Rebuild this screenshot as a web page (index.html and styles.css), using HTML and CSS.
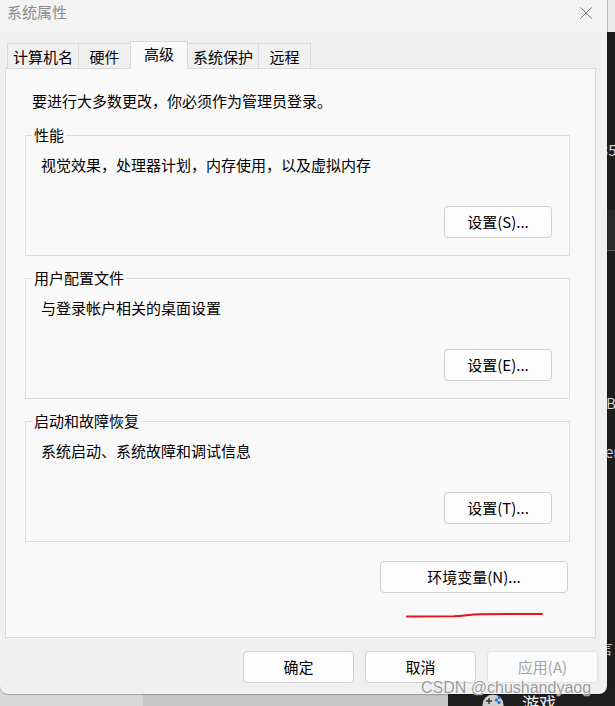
FILE: index.html
```html
<!DOCTYPE html>
<html lang="zh-CN">
<head>
<meta charset="utf-8">
<title>系统属性</title>
<link rel="stylesheet" href="styles.css">
</head>
<body>
<div class="screen">
  <div class="window">
    <div class="titlebar">
      <span class="title">系统属性</span>
      <svg class="close" width="12" height="12" viewBox="0 0 12 12" aria-label="关闭"><path d="M0.5 0.5 L11.5 11.5 M11.5 0.5 L0.5 11.5" stroke="#6f6f6f" stroke-width="1" fill="none"/></svg>
    </div>
    <div class="tabs">
      <div class="tab">计算机名</div>
      <div class="tab">硬件</div>
      <div class="tab active">高级</div>
      <div class="tab">系统保护</div>
      <div class="tab">远程</div>
    </div>
    <div class="panel">
      <p class="intro">要进行大多数更改，你必须作为管理员登录。</p>
      <fieldset class="group">
        <legend>性能</legend>
        <p class="desc">视觉效果，处理器计划，内存使用，以及虚拟内存</p>
        <div class="group-actions"><button class="btn set">设置(S)...</button></div>
      </fieldset>
      <fieldset class="group">
        <legend>用户配置文件</legend>
        <p class="desc">与登录帐户相关的桌面设置</p>
        <div class="group-actions"><button class="btn set">设置(E)...</button></div>
      </fieldset>
      <fieldset class="group">
        <legend>启动和故障恢复</legend>
        <p class="desc">系统启动、系统故障和调试信息</p>
        <div class="group-actions"><button class="btn set">设置(T)...</button></div>
      </fieldset>
      <div class="env-row"><button class="btn env">环境变量(N)...</button></div>
      <svg class="redline" width="140" height="8" viewBox="0 0 140 8"><path d="M1 5.6 L48 5.3 C58 5 64 3.4 74 3.2 L136 2.9" stroke="#e3161f" stroke-width="2" fill="none" stroke-linecap="round"/></svg>
    </div>
    <div class="footer">
      <button class="btn foot">确定</button>
      <button class="btn foot">取消</button>
      <button class="btn foot disabled">应用(A)</button>
    </div>
  </div>
  <div class="side">
    <div class="side-top"></div>
    <div class="side-dark1"><span class="frag">35</span></div>
    <div class="side-band"></div>
    <div class="side-dark2">
      <span class="frag f-b">B</span>
      <span class="frag f-er">er</span>
      <span class="frag f-yan">言</span>
    </div>
  </div>
  <div class="bottom">
    <div class="seg seg-a"></div>
    <div class="seg seg-b"></div>
    <div class="seg seg-c">
      <svg class="pad" width="22" height="12" viewBox="0 0 22 12"><circle cx="11" cy="11" r="10.5" fill="#cfcfcf"/><path d="M4 7 H10 M7 4 V10" stroke="#333" stroke-width="1.4"/><circle cx="14.5" cy="6" r="1.6" fill="#1f6fd6"/><circle cx="17" cy="3.5" r="1.6" fill="#1f6fd6"/><circle cx="17" cy="8.5" r="1.6" fill="#1f6fd6"/></svg>
      <span class="game">游戏</span>
    </div>
  </div>
  <div class="watermark">CSDN @chushandyaog</div>
</div>
</body>
</html>
```

FILE: styles.css
```css
* { box-sizing: border-box; }
html, body { margin: 0; padding: 0; }
body {
  width: 615px;
  height: 706px;
  overflow: hidden;
  background: #1f1f1f;
  font-family: "Noto Sans CJK SC", "Noto Sans", sans-serif;
  font-size: 15px;
  color: #000;
}
.screen {
  position: relative;
  width: 615px;
  height: 706px;
  display: grid;
  grid-template-columns: 607px 8px;
  grid-template-rows: 694px 12px;
  background: linear-gradient(to right, #d8d8d8 0 143px, #c6c6c6 143px 448px, #1f1f1f 448px);
}
.window {
  grid-column: 1;
  grid-row: 1;
  position: relative;
  z-index: 1;
  display: flex;
  flex-direction: column;
  background: #f0f0f0;
  border-radius: 0 0 8px 8px;
  box-shadow: 1px 0 0 rgba(0,0,0,0.18), 0 1px 1px rgba(0,0,0,0.25);
}
.titlebar {
  height: 31px;
  background: #f3f3f3;
  display: flex;
  align-items: flex-start;
  justify-content: space-between;
  padding: 2px 15px 0 7px;
}
.title { color: #8c8c8c; line-height: 20px; }
.close { margin-top: 5px; }

.tabs {
  display: flex;
  align-items: flex-end;
  height: 27px;
  margin-top: 10px;
  padding-left: 7px;
  position: relative;
  z-index: 2;
}
.tab {
  height: 25px;
  min-width: 53px;
  padding: 3px 5px 0;
  border: 1px solid #d9d9d9;
  border-bottom: none;
  background: #f0f0f0;
  line-height: 20px;
  text-align: center;
  white-space: nowrap;
  margin-right: -1px;
}
.tab.active {
  height: 28px;
  min-width: 58px;
  padding-top: 2px;
  margin-bottom: -1px;
  background: #f9f9f9;
  position: relative;
  z-index: 1;
}

.panel {
  position: relative;
  margin-left: 5px;
  width: 591px;
  height: 570px;
  border: 1px solid #d9d9d9;
  background: #f9f9f9;
  padding: 22px 0 0 19px;
}
.intro { margin: 0 0 14px 7px; line-height: 20px; }
.group {
  width: 545px;
  min-width: 0;
  margin: 0;
  padding: 0 17px 17px 0;
  border: 1px solid #dcdcdc;
}
.group + .group { margin-top: 12px; }
.group legend { margin-left: 6px; padding: 0 2px; line-height: 20px; }
.desc { margin: 10px 0 0 15px; line-height: 20px; }
.group-actions { display: flex; justify-content: flex-end; margin-top: 31px; }

.btn {
  height: 32px;
  padding: 0;
  border: 1px solid #d0d0d0;
  border-radius: 4px;
  background: #fdfdfd;
  font: inherit;
  line-height: 20px;
  color: #000;
}
.btn.set { width: 108px; }
.env-row {
  width: 545px;
  display: flex;
  justify-content: flex-end;
  padding-right: 2px;
  margin-top: 19px;
}
.btn.env { width: 188px; }
.redline { position: absolute; left: 400px; top: 542px; }

.footer {
  display: flex;
  justify-content: flex-end;
  gap: 11px;
  padding: 13px 9px 0 0;
}
.btn.foot { width: 111px; }
.btn.disabled { color: #a3a3a3; border-color: #e4e4e4; background: #fbfbfb; }

.side {
  grid-column: 2;
  grid-row: 1;
  display: flex;
  flex-direction: column;
  overflow: hidden;
  background: #1d1d1d;
  color: #d6d6d6;
  line-height: 20px;
}
.side-top { height: 32px; background: #ebebeb; }
.side-dark1 { height: 178px; padding-top: 108px; }
.side-band { height: 41px; background: #2a2a2a; border-bottom: 1px solid #5e5e5e; }
.side-dark2 { flex: 1; display: flex; flex-direction: column; }
.frag { display: block; margin-left: -7px; white-space: nowrap; }
.f-b { margin-top: 142px; margin-left: -1px; }
.f-er { margin-top: 29px; margin-left: -2px; }
.f-yan { margin-top: 176px; margin-left: -9px; color: #bdbdbd; }

.bottom { grid-column: 1 / 3; grid-row: 2; display: flex; }
.seg-a { width: 143px; background: #d8d8d8; }
.seg-b { width: 305px; background: #c6c6c6; }
.seg-c { flex: 1; background: #1f1f1f; display: flex; align-items: flex-start; padding-left: 34px; overflow: hidden; }
.pad { flex: none; }
.game { margin-left: 18px; color: #f2f2f2; font-size: 17px; line-height: 20px; margin-top: -1px; }

.watermark {
  position: absolute;
  left: 421px;
  top: 680px;
  z-index: 5;
  font-family: "Liberation Sans", Arial, sans-serif;
  font-size: 16px;
  line-height: 16px;
  color: #9a9a9a;
  text-shadow: 0 0 1px #fff, 0 0 1px #fff;
  white-space: nowrap;
}
```
